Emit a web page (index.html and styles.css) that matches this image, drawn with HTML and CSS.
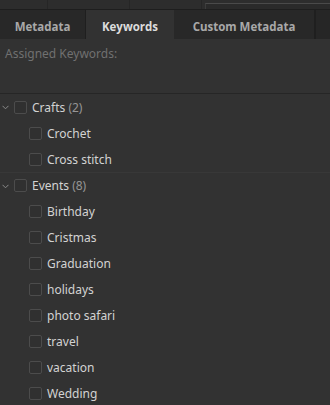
FILE: index.html
```html
<!DOCTYPE html>
<html lang="en">
<head>
    <meta charset="UTF-8">
    <title>Keywords</title>
    <link rel="stylesheet" href="styles.css">
</head>
<body>
    <div class="topstrip">
        <div class="cell" style="width: 48px"></div>
        <div class="cell" style="width: 82px"></div>
        <div class="cell" style="width: 72px"></div>
        <div class="field"></div>
    </div>
    <div class="tabs">
        <div class="tab" style="width: 86px">Metadata</div>
        <div class="tab active" style="width: 88px">Keywords</div>
        <div class="tab" style="width: 141px">Custom Metadata</div>
        <div class="tab rest"></div>
    </div>
    <div class="assigned">Assigned Keywords:</div>
    <div class="tree">
        <div class="group">
            <div class="row parent">
                <span class="chev"><svg width="7" height="5" viewBox="0 0 7 5"><path d="M0.5 0.8 L3.5 3.8 L6.5 0.8" fill="none" stroke="#8a8a8a" stroke-width="1"/></svg></span>
                <span class="box"></span>
                <span class="label">Crafts <span class="count">(2)</span></span>
            </div>
            <div class="row child"><span class="box"></span><span class="label">Crochet</span></div>
            <div class="row child"><span class="box"></span><span class="label">Cross stitch</span></div>
        </div>
        <div class="group">
            <div class="row parent">
                <span class="chev"><svg width="7" height="5" viewBox="0 0 7 5"><path d="M0.5 0.8 L3.5 3.8 L6.5 0.8" fill="none" stroke="#8a8a8a" stroke-width="1"/></svg></span>
                <span class="box"></span>
                <span class="label">Events <span class="count">(8)</span></span>
            </div>
            <div class="row child"><span class="box"></span><span class="label">Birthday</span></div>
            <div class="row child"><span class="box"></span><span class="label">Cristmas</span></div>
            <div class="row child"><span class="box"></span><span class="label">Graduation</span></div>
            <div class="row child"><span class="box"></span><span class="label">holidays</span></div>
            <div class="row child"><span class="box"></span><span class="label">photo safari</span></div>
            <div class="row child"><span class="box"></span><span class="label">travel</span></div>
            <div class="row child"><span class="box"></span><span class="label">vacation</span></div>
            <div class="row child"><span class="box"></span><span class="label">Wedding</span></div>
        </div>
    </div>
</body>
</html>
```

FILE: styles.css
```css
* {
    margin: 0;
    padding: 0;
    box-sizing: border-box;
}

body {
    background: #323232;
    font-family: 'Noto Sans', 'Open Sans', sans-serif;
    width: 330px;
    height: 405px;
    overflow: hidden;
}

.topstrip {
    display: flex;
    height: 10px;
    background: #2d2d2d;
    border-bottom: 1px solid #1e1e1e;
}

.cell {
    height: 9px;
    border-right: 1px solid #262626;
}

.field {
    flex: 1;
    margin-left: 3px;
    margin-top: 3px;
    height: 6px;
    border-top: 1px solid #4a4a4a;
    border-left: 1px solid #3c3c3c;
    background: #2a2a2a;
}

.tabs {
    display: flex;
    height: 29px;
    background: #262626;
}

.tab {
    display: flex;
    align-items: center;
    justify-content: center;
    background: #282828;
    border-right: 1px solid #1f1f1f;
    color: #a8a8a8;
    font-family: 'Open Sans', sans-serif;
    font-weight: bold;
    font-size: 11.5px;
    padding-top: 3px;
}

.tab.active {
    background: #323232;
    color: #dcdcdc;
    border-right: none;
}

.tab.rest {
    flex: 1;
    background: #262626;
    border-left: 1px solid #1f1f1f;
    border-right: none;
}

.assigned {
    height: 55px;
    padding: 6px 0 0 5px;
    color: #707070;
    font-size: 12px;
    border-bottom: 1px solid #262626;
}

.group + .group {
    border-top: 1px solid #383838;
}

.row {
    display: flex;
    align-items: center;
    height: 26px;
    color: #d2d2d2;
    font-size: 12px;
}

.group + .group .row:first-child {
    height: 25px;
}

.parent {
    padding-left: 2px;
}

.child {
    padding-left: 29px;
}

.chev {
    display: flex;
    width: 12px;
    padding-top: 1px;
}

.box {
    width: 13px;
    height: 13px;
    border: 1px solid #4c4c4c;
    border-radius: 2px;
    background: #303030;
    margin-right: 5px;
}

.count {
    color: #959595;
}
```
